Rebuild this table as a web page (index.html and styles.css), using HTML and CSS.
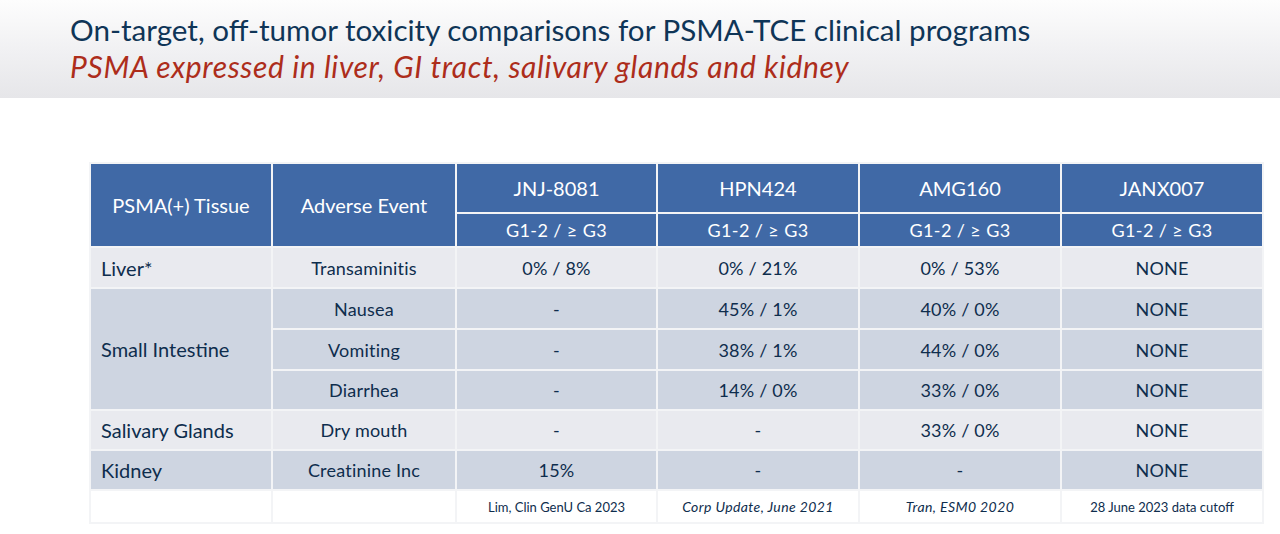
FILE: index.html
```html
<!DOCTYPE html>
<html>
<head>
<meta charset="utf-8">
<link rel="stylesheet" href="styles.css">
</head>
<body>
<header class="band">
  <h1 class="title">On-target, off-tumor toxicity comparisons for PSMA-TCE clinical programs</h1>
  <h2 class="subtitle">PSMA expressed in liver, GI tract, salivary glands and kidney</h2>
</header>
<main class="content">
  <table class="tox">
    <colgroup>
      <col class="c1"><col class="c2"><col class="c3"><col class="c4"><col class="c5"><col class="c6">
    </colgroup>
    <thead>
      <tr class="h1">
        <th rowspan="2">PSMA(+) Tissue</th>
        <th rowspan="2">Adverse Event</th>
        <th>JNJ-8081</th>
        <th>HPN424</th>
        <th>AMG160</th>
        <th>JANX007</th>
      </tr>
      <tr class="h2">
        <th>G1-2 / ≥ G3</th>
        <th>G1-2 / ≥ G3</th>
        <th>G1-2 / ≥ G3</th>
        <th>G1-2 / ≥ G3</th>
      </tr>
    </thead>
    <tbody>
      <tr class="light r41">
        <td class="tissue">Liver*</td>
        <td>Transaminitis</td>
        <td>0% / 8%</td>
        <td>0% / 21%</td>
        <td>0% / 53%</td>
        <td>NONE</td>
      </tr>
      <tr class="dark r41">
        <td class="tissue" rowspan="3">Small Intestine</td>
        <td>Nausea</td>
        <td>-</td>
        <td>45% / 1%</td>
        <td>40% / 0%</td>
        <td>NONE</td>
      </tr>
      <tr class="dark r41">
        <td>Vomiting</td>
        <td>-</td>
        <td>38% / 1%</td>
        <td>44% / 0%</td>
        <td>NONE</td>
      </tr>
      <tr class="dark r40">
        <td>Diarrhea</td>
        <td>-</td>
        <td>14% / 0%</td>
        <td>33% / 0%</td>
        <td>NONE</td>
      </tr>
      <tr class="light r40">
        <td class="tissue">Salivary Glands</td>
        <td>Dry mouth</td>
        <td>-</td>
        <td>-</td>
        <td>33% / 0%</td>
        <td>NONE</td>
      </tr>
      <tr class="dark r40">
        <td class="tissue">Kidney</td>
        <td>Creatinine Inc</td>
        <td>15%</td>
        <td>-</td>
        <td>-</td>
        <td>NONE</td>
      </tr>
      <tr class="foot">
        <td></td>
        <td></td>
        <td>Lim, Clin GenU Ca 2023</td>
        <td class="it">Corp Update, June 2021</td>
        <td class="it">Tran, ESM0 2020</td>
        <td>28 June 2023 data cutoff</td>
      </tr>
    </tbody>
  </table>
</main>
</body>
</html>
```

FILE: styles.css
```css
html, body {
  margin: 0;
  padding: 0;
  background: #ffffff;
}
body {
  width: 1280px;
  height: 534px;
  overflow: hidden;
  font-family: "Lato", "Open Sans", sans-serif;
}
.band {
  height: 98px;
  box-sizing: border-box;
  padding: 12px 0 0 70px;
  background: linear-gradient(to bottom, #fdfdfd 0%, #f1f1f3 50%, #e6e6e9 100%);
}
.title {
  margin: 0;
  font-weight: 400;
  font-size: 29.6px;
  line-height: 36px;
  color: #0f3557;
  white-space: nowrap;
}
.subtitle {
  margin: 0;
  font-weight: 400;
  font-style: italic;
  font-size: 30px;
  line-height: 36px;
  color: #ad2d1b;
  letter-spacing: 0.65px;
  white-space: nowrap;
}
.content {
  padding: 64px 0 0 89px;
}
.tox {
  border-collapse: collapse;
  table-layout: fixed;
  width: 1175px;
  color: #0e2d4d;
}
.c1 { width: 182px; }
.c2 { width: 184px; }
.c3 { width: 201px; }
.c4 { width: 202px; }
.c5 { width: 202px; }
.c6 { width: 202px; }
.tox th, .tox td {
  border: 2px solid #f3f4f6;
  padding: 0;
  text-align: center;
  vertical-align: middle;
}
.tox th {
  background: #4069a6;
  color: #ffffff;
  font-weight: 400;
}
.h1 th {
  height: 48px;
  font-size: 20px;
}
.h2 th {
  height: 32px;
  font-size: 18px;
  letter-spacing: 0.4px;
}
.tox td {
  font-size: 18px;
  letter-spacing: 0.2px;
}
.r41 td { height: 39px; }
.r40 td { height: 38px; }
.light td { background: #e9eaef; }
.dark td { background: #ced5e1; }
.tox td.tissue {
  text-align: left;
  padding-left: 10px;
  font-size: 20px;
  letter-spacing: 0;
}
.foot td {
  background: #ffffff;
  height: 31px;
  font-size: 13px;
  letter-spacing: 0;
}
.tox .foot td.it {
  font-style: italic;
  font-size: 14px;
  letter-spacing: 0.4px;
}
```
